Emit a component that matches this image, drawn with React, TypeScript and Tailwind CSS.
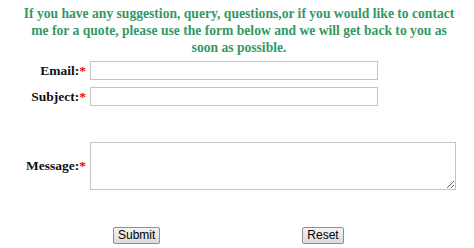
export default function App() {
  return (
    <div className="w-[474px] h-[248px] bg-white overflow-hidden font-['Liberation_Serif',serif]">
      <p className="pt-[5px] pl-[22px] pr-[18px] text-center text-[13.6px] leading-[17px] font-bold text-[#339966]">
        If you have any suggestion, query, questions,or if you would like to contact me for a quote, please use the form below and we will get back to you as soon as possible.
      </p>

      <form className="mt-[5px]" onSubmit={(e) => e.preventDefault()}>
        <div className="grid grid-cols-[86px_1fr] gap-x-[4px] items-center">
          <label className="h-[19px] leading-[19px] text-right text-[13.5px] font-bold text-[#111]">
            Email:<span className="text-red-600">*</span>
          </label>
          <input type="text" className="block w-[288px] h-[19px] border border-[#c4c4c4] bg-white outline-none" />

          <label className="mt-[7px] h-[19px] leading-[19px] text-right text-[13.5px] font-bold text-[#111]">
            Subject:<span className="text-red-600">*</span>
          </label>
          <input type="text" className="block mt-[7px] w-[288px] h-[19px] border border-[#c4c4c4] bg-white outline-none" />

          <label className="mt-[36px] text-right text-[13.5px] font-bold text-[#111]">
            Message:<span className="text-red-600">*</span>
          </label>
          <textarea className="block mt-[36px] w-[366px] h-[48px] border border-[#c4c4c4] bg-white outline-none resize" />
        </div>

        <div className="mt-[37px] flex pl-[113px]">
          <button type="submit" className="h-[17px] px-[4px] border border-[#8f8f8f] rounded-[2px] bg-gradient-to-b from-[#f4f4f4] to-[#dcdcdc] font-['Liberation_Sans',sans-serif] text-[12px] leading-[15px] text-black">
            Submit
          </button>
          <button type="reset" className="ml-[142px] h-[17px] px-[4px] border border-[#8f8f8f] rounded-[2px] bg-gradient-to-b from-[#f4f4f4] to-[#dcdcdc] font-['Liberation_Sans',sans-serif] text-[12px] leading-[15px] text-black">
            Reset
          </button>
        </div>
      </form>
    </div>
  );
}
